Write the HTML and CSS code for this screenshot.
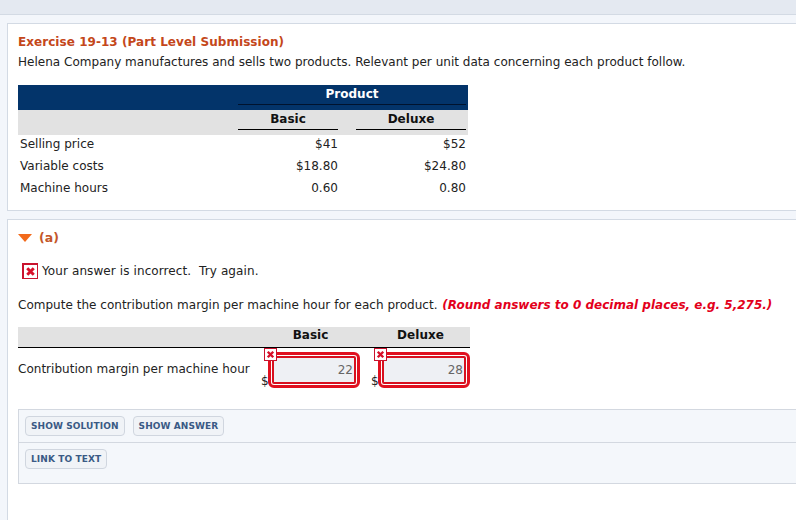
FILE: index.html
```html
<!DOCTYPE html>
<html lang="en">
<head>
  <meta charset="UTF-8">
  <title>Exercise 19-13</title>
  <link rel="stylesheet" href="styles.css">
</head>
<body>

<div class="topbar"></div>

<div class="panel panel-intro">
  <h2 class="title">Exercise 19-13 (Part Level Submission)</h2>
  <p class="intro">Helena Company manufactures and sells two products. Relevant per unit data concerning each product follow.</p>

  <table class="data">
    <colgroup>
      <col class="col-label">
      <col class="col-basic">
      <col class="col-gap">
      <col class="col-deluxe">
      <col class="col-end">
    </colgroup>
    <thead>
      <tr class="head-top">
        <th></th>
        <th colspan="3"><span class="head-line">Product</span></th>
        <th></th>
      </tr>
      <tr class="head-sub">
        <th></th>
        <th><span class="head-line">Basic</span></th>
        <th></th>
        <th><span class="head-line">Deluxe</span></th>
        <th></th>
      </tr>
    </thead>
    <tbody>
      <tr><td>Selling price</td><td class="num">$41</td><td></td><td class="num">$52</td><td></td></tr>
      <tr><td>Variable costs</td><td class="num">$18.80</td><td></td><td class="num">$24.80</td><td></td></tr>
      <tr><td>Machine hours</td><td class="num">0.60</td><td></td><td class="num">0.80</td><td></td></tr>
    </tbody>
  </table>
</div>

<div class="panel panel-part">
  <div class="part-head">
    <span class="arrow"></span>
    <span class="part-name">(a)</span>
  </div>

  <div class="result">
    <span class="x-mark x-large"><svg viewBox="0 0 10 10"><path d="M2.5 2.5l5 5M7.5 2.5l-5 5"/></svg></span>
    <span class="result-text">Your answer is incorrect.&nbsp; Try again.</span>
  </div>

  <p class="question">Compute the contribution margin per machine hour for each product. <em>(Round answers to 0 decimal places, e.g. 5,275.)</em></p>

  <div class="answers">
    <div class="answers-head">
      <span class="answers-col">Basic</span>
      <span class="answers-col">Deluxe</span>
    </div>
    <div class="answers-row">
      <span class="answers-label">Contribution margin per machine hour</span>
      <div class="field">
        <span class="dollar">$</span>
        <span class="x-mark x-small"><svg viewBox="0 0 10 10"><path d="M2.5 2.5l5 5M7.5 2.5l-5 5"/></svg></span>
        <div class="box"><input class="box-input" type="text" value="22" disabled></div>
      </div>
      <div class="field">
        <span class="dollar">$</span>
        <span class="x-mark x-small"><svg viewBox="0 0 10 10"><path d="M2.5 2.5l5 5M7.5 2.5l-5 5"/></svg></span>
        <div class="box"><input class="box-input" type="text" value="28" disabled></div>
      </div>
    </div>
  </div>

  <div class="actions">
    <div class="actions-row">
      <a href="#" class="btn">SHOW SOLUTION</a>
      <a href="#" class="btn">SHOW ANSWER</a>
    </div>
    <div class="actions-row actions-last">
      <a href="#" class="btn">LINK TO TEXT</a>
    </div>
  </div>
</div>

</body>
</html>
```

FILE: styles.css
```css
body {
  margin: 0;
  padding: 0;
  height: 520px;
  overflow: hidden;
  background-color: #f3f6fb;
  font-family: "DejaVu Sans", Verdana, sans-serif;
  font-size: 12px;
  letter-spacing: 0.02px;
  color: #222;
}
.topbar {
  height: 14px;
  background-color: #e4e9f1;
  border-bottom: 1px solid #d3dae4;
}
.panel {
  margin-left: 7px;
  background-color: #fff;
  border: 1px solid #d3dae4;
  border-right: none;
}
.panel-intro {
  margin-top: 8px;
  margin-bottom: 8px;
  height: 176px;
  padding: 10px 0 0 10px;
}
.title {
  margin: 0;
  font-size: 12px;
  line-height: 16px;
  font-weight: bold;
  letter-spacing: 0.05px;
  color: #c4471a;
}
.intro {
  margin: 4px 0 15px;
  line-height: 16px;
}
.data {
  width: 450px;
  border-collapse: collapse;
  table-layout: fixed;
}
.col-label { width: 220px; }
.col-basic { width: 100px; }
.col-gap { width: 18px; }
.col-deluxe { width: 110px; }
.col-end { width: 2px; }
.data th {
  height: 25px;
  box-sizing: border-box;
  padding: 0;
  text-align: center;
  font-size: 12px;
  vertical-align: top;
}
.head-line {
  display: block;
  height: 20px;
  box-sizing: border-box;
  line-height: 18px;
  border-bottom: 1px solid #000;
}
.head-top th {
  background-color: #03346a;
  color: #fff;
}
.head-top .head-line {
  border-bottom-color: #00132e;
}
.head-sub th {
  background-color: #e2e2e2;
  color: #111;
}
.data td {
  height: 22px;
  box-sizing: border-box;
  padding: 1px 0 0;
  line-height: 16px;
  vertical-align: top;
}
.data td:first-child {
  padding-left: 2px;
}
.data .num {
  text-align: right;
}
.panel-part {
  height: 300px;
  border-bottom: none;
  padding: 0 0 0 10px;
}
.part-head {
  display: flex;
  align-items: center;
  gap: 7px;
  height: 16px;
  margin-top: 9px;
}
.arrow {
  width: 0;
  height: 0;
  margin-top: 2px;
  border-left: 7.5px solid transparent;
  border-right: 7.5px solid transparent;
  border-top: 8px solid #f26a1b;
}
.part-name {
  font-size: 12.5px;
  font-weight: bold;
  color: #c4562a;
}
.result {
  display: flex;
  align-items: center;
  gap: 4px;
  height: 16px;
  margin: 18px 0 0 4px;
}
.x-mark {
  display: block;
  box-sizing: border-box;
  background-color: #fff;
  border: 1px solid #c9132e;
}
.x-mark svg {
  display: block;
  width: 100%;
  height: 100%;
  fill: none;
  stroke: #d8102a;
  stroke-width: 2.2;
}
.x-large {
  width: 16px;
  height: 16px;
  border-width: 2px 1px 1px 2px;
}
.result-text {
  line-height: 16px;
  letter-spacing: 0.1px;
}
.question {
  margin: 18px 0 0;
  line-height: 16px;
}
.question em {
  font-weight: bold;
  font-style: italic;
  margin-left: 1px;
  letter-spacing: 0;
  color: #e3001b;
}
.answers {
  width: 452px;
  margin-top: 14px;
}
.answers-head {
  display: grid;
  grid-template-columns: 243px 99px 11px 99px;
  height: 20px;
  background-color: #e2e2e2;
  border-bottom: 1px solid #000;
}
.answers-head .answers-col:first-child {
  grid-column: 2;
}
.answers-head .answers-col:last-child {
  grid-column: 4;
}
.answers-col {
  font-size: 12px;
  font-weight: bold;
  line-height: 16px;
  text-align: center;
  color: #111;
}
.answers-row {
  display: grid;
  grid-template-columns: 243px 99px 11px 99px;
  margin-top: 4px;
}
.answers-label {
  line-height: 16px;
  padding-top: 9px;
}
.field {
  position: relative;
  display: flex;
  justify-content: flex-end;
  align-items: flex-end;
}
.field:last-child {
  grid-column: 4;
}
.dollar {
  position: absolute;
  left: 0;
  bottom: 0;
  line-height: 14px;
}
.x-small {
  position: absolute;
  left: 3px;
  top: -4px;
  width: 13px;
  height: 13px;
}
.box {
  width: 92px;
  height: 36px;
  box-sizing: border-box;
  border: 3px solid #e0101f;
  border-radius: 6px;
  padding: 1px;
  background-color: #fff;
}
.box-input {
  display: block;
  width: 100%;
  height: 100%;
  box-sizing: border-box;
  margin: 0;
  padding: 0 1px 0 0;
  border: 2px solid #d8101f;
  border-radius: 2px;
  background-color: #eef0f4;
  font-family: inherit;
  font-size: 12px;
  color: #666;
  text-align: right;
}
.actions {
  margin-top: 21px;
  height: 73px;
  background-color: #f4f7fb;
  border: 1px solid #d3d8e0;
  border-right: none;
}
.actions-row {
  display: flex;
  gap: 8px;
  height: 33px;
  padding: 6px 0 0 6px;
  box-sizing: border-box;
  border-bottom: 1px solid #d3d8e0;
}
.actions-last {
  border-bottom: none;
}
.btn {
  display: block;
  height: 20px;
  box-sizing: border-box;
  padding: 0 5px;
  border: 1px solid #d0d6df;
  border-radius: 4px;
  background-color: #f0f3f7;
  font-size: 9px;
  font-weight: bold;
  letter-spacing: 0.1px;
  line-height: 18px;
  color: #3a5a85;
  text-decoration: none;
}
```
